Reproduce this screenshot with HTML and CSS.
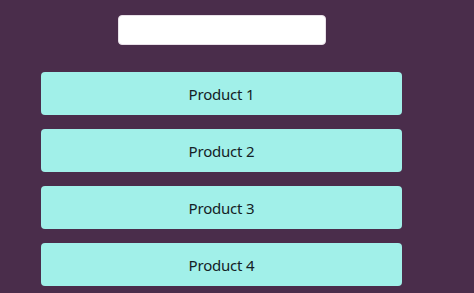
FILE: index.html
```html
<!DOCTYPE html>
<html lang="en">
<head>
  <meta charset="UTF-8">
  <meta name="viewport" content="width=device-width, initial-scale=1.0">
  <title>Products</title>
  <link rel="stylesheet" href="styles.css">
</head>
<body>
  <div class="container">
    <input class="search" type="text">
    <div class="product-list">
      <button class="product">Product 1</button>
      <button class="product">Product 2</button>
      <button class="product">Product 3</button>
      <button class="product">Product 4</button>
    </div>
  </div>
</body>
</html>
```

FILE: styles.css
```css
body {
  margin: 0;
  background: #4a2d4b;
  font-family: "Noto Sans", "DejaVu Sans", sans-serif;
  height: 100vh;
  overflow: hidden;
}
.container {
  display: flex;
  flex-direction: column;
  align-items: center;
  width: 361px;
  padding: 15px 0 0 41px;
}
.search {
  box-sizing: border-box;
  width: 208px;
  height: 30px;
  margin: 0 0 27px 1px;
  border: 1px solid #e8e0e8;
  border-radius: 4px;
  background: #fff;
  outline: none;
}
.product-list {
  display: flex;
  flex-direction: column;
  gap: 14px;
  width: 100%;
}
.product {
  height: 43px;
  border: none;
  border-radius: 4px;
  background: #a1f0e9;
  color: #142226;
  font-family: "Noto Sans", "DejaVu Sans", sans-serif;
  font-size: 15px;
  letter-spacing: -0.2px;
  cursor: pointer;
}
```
